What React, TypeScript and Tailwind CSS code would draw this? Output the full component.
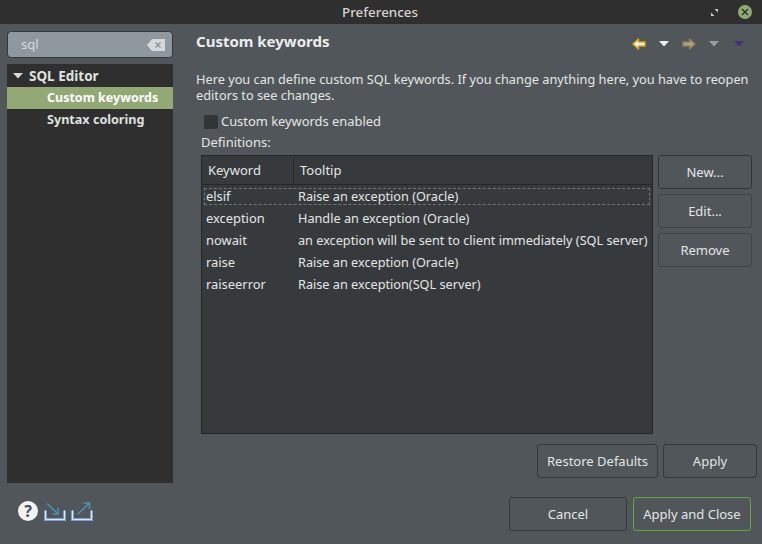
import React from "react";

const rows = [
  ["elsif", "Raise an exception (Oracle)"],
  ["exception", "Handle an exception (Oracle)"],
  ["nowait", "an exception will be sent to client immediately (SQL server)"],
  ["raise", "Raise an exception (Oracle)"],
  ["raiseerror", "Raise an exception(SQL server)"],
];

const Btn = ({ label, className }: { label: string; className: string }) => (
  <button className={`flex items-center justify-center rounded-[3px] border bg-[#505659] pt-[2px] text-[13px] text-[#e4e6e6] ${className}`}>
    {label}
  </button>
);

const Tri = ({ color }: { color: string }) => (
  <svg width="10" height="6" viewBox="0 0 10 6" className="block"><path d="M0 0h10L5 5.500z" fill={color} /></svg>
);

const Arrow = ({ fill, stroke, flip }: { fill: string; stroke: string; flip?: boolean }) => (
  <svg width="14" height="12" viewBox="0 0 14 12" className={`block ${flip ? "-scale-x-100" : ""}`}>
    <path d="M1 6 6.500 1v3h6.500v4H6.500v3z" fill={fill} stroke={stroke} strokeWidth="1.500" strokeLinejoin="round" />
  </svg>
);

const Tray = () => (
  <>
    <path d="M1.500 9.500v9h19v-9" fill="none" stroke="#7d9fd0" strokeWidth="3" />
    <path d="M1.500 9.500v9h19v-9" fill="none" stroke="#dbe6f5" strokeWidth="1" />
  </>
);

const App = () => {
  return (
    <div className="flex h-[544px] w-[762px] flex-col overflow-hidden bg-[#505659] font-['Noto_Sans',sans-serif] text-[13px] text-[#e4e6e6]">
      <div className="flex h-6 shrink-0 items-center bg-[#2f2f2f]">
        <div className="flex-1 pl-[49px] text-center text-[13.400px] font-medium text-[#d3d4d4]">Preferences</div>
        <div className="flex items-center gap-[20px] pr-[10px]">
          <svg width="7" height="7" viewBox="0 0 7 7"><path d="M3.500 0H7v3.500zM0 3.500V7h3.500z" fill="#c9c9c9" /></svg>
          <span className="flex h-[14px] w-[14px] shrink-0 items-center justify-center rounded-full bg-[#8fab72]">
            <svg width="8" height="8" viewBox="0 0 8 8"><path d="M1 1l6 6M7 1L1 7" stroke="#2f3a2a" strokeWidth="1.600" /></svg>
          </span>
        </div>
      </div>

      <div className="flex min-h-0 flex-1">
        <div className="flex w-[173px] shrink-0 flex-col pl-[7px]">
          <div className="mt-[7px] flex h-[27px] items-center justify-between rounded-[4px] border border-[#33383a] bg-[#8f989f] pl-[13px] pr-[7px] text-[#d5d9dc]">
            <span>sql</span>
            <svg width="18" height="12" viewBox="0 0 18 12">
              <path d="M5 0h13v12H5L0 6z" fill="#d5d9dc" />
              <path d="M8.500 3.500l5 5M13.500 3.500l-5 5" stroke="#8f989f" strokeWidth="1.600" />
            </svg>
          </div>
          <div className="mt-[6px] flex h-[419px] flex-col bg-[#2f2f2f] pt-[1px] font-bold text-[#dfe2df]">
            <div className="flex h-[22px] items-center pl-[6px]">
              <Tri color="#d8d8d8" />
              <span className="ml-[6px] text-[13.500px]">SQL Editor</span>
            </div>
            <div className="flex h-[22px] items-center bg-[#92a975] pl-[40px] text-[12.500px] text-white">Custom keywords</div>
            <div className="flex h-[22px] items-center pl-[40px] text-[12.600px]">Syntax coloring</div>
          </div>
          <div className="mt-[18px] flex items-center pl-[11px]">
            <span className="flex h-[20px] w-[20px] items-center justify-center rounded-full bg-[#f2f2f2] text-[16px] font-bold leading-none text-[#3f4f66]">?</span>
            <svg width="22" height="20" viewBox="0 0 22 20" className="ml-[6px]">
              <Tray />
              <path d="M3 2.500l10 9.500M14 7v6H8.500" fill="none" stroke="#4f8fb5" strokeWidth="1.600" />
            </svg>
            <svg width="22" height="20" viewBox="0 0 22 20" className="ml-[5px]">
              <Tray />
              <path d="M7 13L18 2.500M12.500 2h6v6" fill="none" stroke="#4f8fb5" strokeWidth="1.600" />
            </svg>
          </div>
        </div>

        <div className="flex min-w-0 flex-1 flex-col pl-[23px]">
          <div className="mt-[7px] flex h-[20px] items-center justify-between pr-[18px]">
            <span className="text-[15px] font-bold text-[#eceeee]">Custom keywords</span>
            <div className="mt-[6px] flex items-center">
              <Arrow fill="#fffbe0" stroke="#e0a020" />
              <span className="ml-[13px]"><Tri color="#f0f0f0" /></span>
              <span className="ml-[13px]"><Arrow fill="#a9a48e" stroke="#8f7f55" flip /></span>
              <span className="ml-[13px]"><Tri color="#9a9c9d" /></span>
              <span className="ml-[15px]"><Tri color="#4b2f7f" /></span>
            </div>
          </div>
          <p className="mt-[20px] w-[560px] text-[12.750px] leading-[16px]">
            Here you can define custom SQL keywords. If you change anything here, you have to reopen editors to see changes.
          </p>
          <label className="mt-[10px] flex h-[18px] items-center pl-[8px]">
            <span className="h-[14px] w-[14px] rounded-[2px] bg-[#333637]" />
            <span className="ml-[3px] text-[12.900px]">Custom keywords enabled</span>
          </label>
          <div className="mt-[2px] h-[18px] pl-[5px] leading-[18px]">Definitions:</div>

          <div className="mt-[4px] flex gap-[5px] pl-[5px]">
            <div className="flex h-[279px] w-[452px] flex-col border border-[#25282a] bg-[#363a3c]">
              <div className="flex h-[29px] shrink-0 border-b border-[#25282a] pt-[2px]">
                <div className="flex w-[92px] items-center border-r border-[#25282a] pl-[6px]">Keyword</div>
                <div className="flex flex-1 items-center pl-[6px]">Tooltip</div>
              </div>
              <div>
                {rows.map((r, i) => (
                  <div key={r[0]} className="h-[22px] px-[2px] pt-[3px]">
                    <div className={`flex h-[17px] items-center whitespace-nowrap border border-dashed pl-[1px] ${i === 0 ? "border-[#6f7476]" : "border-transparent"}`}>
                      <span className="w-[92px] shrink-0 text-[12.900px]">{r[0]}</span>
                      <span className="text-[12.700px]">{r[1]}</span>
                    </div>
                  </div>
                ))}
              </div>
            </div>
            <div className="flex w-[94px] flex-col gap-[5px]">
              <Btn label="New..." className="h-[34px] border-[#2f3436]" />
              <Btn label="Edit..." className="h-[34px] border-[#3f4446]" />
              <Btn label="Remove" className="h-[34px] border-[#3f4446]" />
            </div>
          </div>

          <div className="mt-[10px] flex justify-end gap-[5px] pr-[5px]">
            <Btn label="Restore Defaults" className="h-[34px] w-[121px] border-[#33383a]" />
            <Btn label="Apply" className="h-[34px] w-[94px] border-[#33383a]" />
          </div>
          <div className="mt-[19px] flex justify-end gap-[6px] pr-[11px]">
            <Btn label="Cancel" className="h-[34px] w-[118px] border-[#33383a]" />
            <Btn label="Apply and Close" className="h-[34px] w-[118px] border-[#62a83c]" />
          </div>
        </div>
      </div>
    </div>
  );
};

export default App;
